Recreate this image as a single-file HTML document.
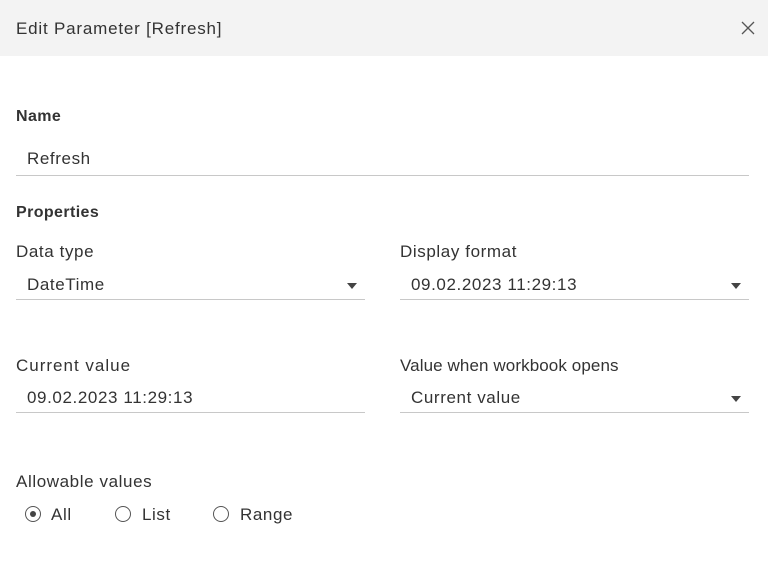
<!DOCTYPE html><html><head><style>
body{margin:0;width:768px;height:587px;background:#fff;font-family:"Liberation Sans",sans-serif;color:#333;position:relative;overflow:hidden}
.h{position:absolute;left:0;top:0;width:768px;height:56px;background:#f3f3f3}
.t{position:absolute;font-size:17px;letter-spacing:0.6px;line-height:20px;white-space:nowrap}
.b{font-weight:bold;font-size:16px;letter-spacing:0.4px}
.l{position:absolute;height:1px;background:#c8c8c8}
.a{position:absolute;width:0;height:0;border-left:5px solid transparent;border-right:5px solid transparent;border-top:6px solid #444}
.r{position:absolute;width:16px;height:16px;border:1px solid #555;border-radius:50%;box-sizing:border-box}
</style></head><body>
<div class="h"></div>
<div class="t" style="left:16px;top:19px;letter-spacing:0.8px">Edit Parameter [Refresh]</div>
<svg style="position:absolute;left:741px;top:21px" width="14" height="14"><path d="M1 1L13 13M13 1L1 13" stroke="#555" stroke-width="1.3"/></svg>
<div class="t b" style="left:16px;top:107px">Name</div>
<div class="t" style="left:27px;top:149px">Refresh</div>
<div class="l" style="left:16px;width:733px;top:175px"></div>
<div class="t b" style="left:16px;top:203px">Properties</div>
<div class="t" style="left:16px;top:242px">Data type</div>
<div class="t" style="left:27px;top:275px">DateTime</div>
<div class="a" style="left:347px;top:283px"></div>
<div class="l" style="left:16px;width:349px;top:299px"></div>
<div class="t" style="left:400px;top:242px">Display format</div>
<div class="t" style="left:411px;top:275px">09.02.2023 11:29:13</div>
<div class="a" style="left:731px;top:283px"></div>
<div class="l" style="left:400px;width:349px;top:299px"></div>
<div class="t" style="left:16px;top:356px;letter-spacing:1px">Current value</div>
<div class="t" style="left:27px;top:388px">09.02.2023 11:29:13</div>
<div class="l" style="left:16px;width:349px;top:412px"></div>
<div class="t" style="left:400px;top:356px;letter-spacing:0.1px">Value when workbook opens</div>
<div class="t" style="left:411px;top:388px">Current value</div>
<div class="a" style="left:731px;top:396px"></div>
<div class="l" style="left:400px;width:349px;top:412px"></div>
<div class="t" style="left:16px;top:472px">Allowable values</div>
<div class="r" style="left:25px;top:506px"></div>
<div style="position:absolute;left:30px;top:511px;width:6px;height:6px;border-radius:50%;background:#444"></div>
<div class="t" style="left:51px;top:505px">All</div>
<div class="r" style="left:115px;top:506px"></div>
<div class="t" style="left:142px;top:505px">List</div>
<div class="r" style="left:213px;top:506px"></div>
<div class="t" style="left:240px;top:505px">Range</div>
</body></html>
